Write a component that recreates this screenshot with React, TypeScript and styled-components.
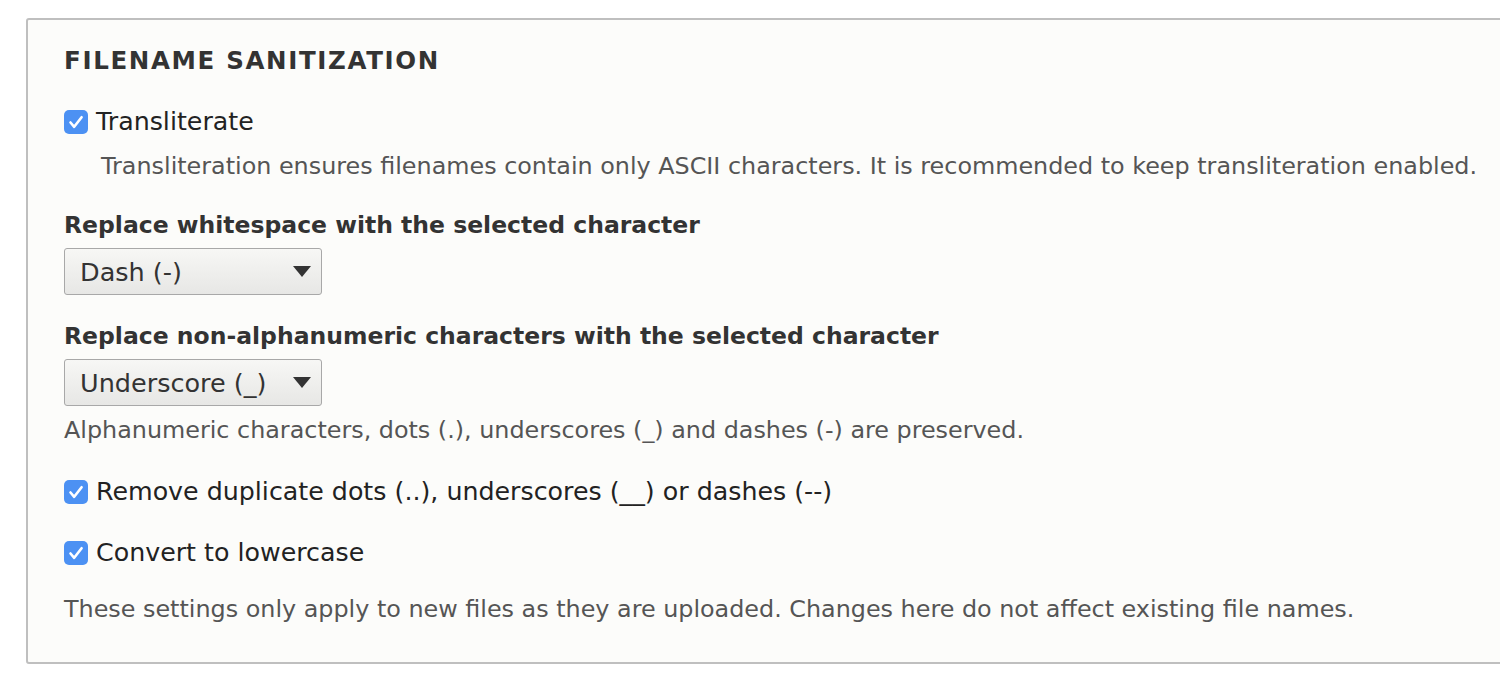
import { createGlobalStyle, styled } from "styled-components"

const GlobalStyle = createGlobalStyle`
html, body {
    margin: 0;
    padding: 0;
    background: #fff;
    overflow: hidden;
}
body {
    font-family: "DejaVu Sans", "Liberation Sans", sans-serif;
    color: #333;
}
`

const Page = styled.div`
padding: 18px 0 0 26px;
`

const Fieldset = styled.fieldset`
box-sizing: border-box;
width: 1500px;
height: 646px;
margin: 0;
padding: 26px 36px 0 36px;
border: 2px solid #bfbfbf;
border-radius: 3px;
background: #fcfcfa;
`

const Legend = styled.h2`
margin: 0 0 31px 0;
font-size: 24.5px;
line-height: 30px;
font-weight: bold;
letter-spacing: 1.65px;
text-transform: uppercase;
color: #333;
`

const Item = styled.div<{ $gap?: number }>`
margin-bottom: ${({ $gap }) => $gap ?? 24}px;
`

const CheckRow = styled.label`
display: flex;
align-items: center;
gap: 8px;
font-size: 25.3px;
line-height: 30px;
color: #222;
`

const Box = styled.span`
display: flex;
align-items: center;
justify-content: center;
width: 24px;
height: 24px;
border-radius: 5px;
background: #4c91f3;
flex: none;
`

const Label = styled.div`
font-size: 23.5px;
line-height: 30px;
font-weight: bold;
color: #333;
margin-bottom: 8px;
`

const Description = styled.div<{ $indent?: boolean }>`
font-size: 23.85px;
line-height: 30px;
color: #555;
margin-top: ${({ $indent }) => ($indent ? 14 : 9)}px;
padding-left: ${({ $indent }) => ($indent ? 37 : 0)}px;
`

const SelectBox = styled.div`
box-sizing: border-box;
display: flex;
align-items: center;
justify-content: space-between;
width: 258px;
height: 47px;
padding: 0 10px 0 15px;
border: 1px solid #a8a8a8;
border-radius: 3px;
background: linear-gradient(#f7f7f5, #e7e7e5);
font-size: 25.5px;
color: #333;
`

function Checkbox({ label }: { label: string }) {
    return (
        <CheckRow>
            <Box>
                <svg width="24" height="24" viewBox="0 0 24 24">
                    <path d="M6.5 12.5 L10.2 16.8 L17.6 7.2" fill="none" stroke="#fff" strokeWidth="2.6" strokeLinecap="round" strokeLinejoin="round" />
                </svg>
            </Box>
            {label}
        </CheckRow>
    )
}

function Select({ value }: { value: string }) {
    return (
        <SelectBox>
            <span>{value}</span>
            <svg width="18" height="12" viewBox="0 0 18 12">
                <path d="M0 0 H18 L9 11 Z" fill="#333" />
            </svg>
        </SelectBox>
    )
}

export default function App() {
    return (
        <Page>
            <GlobalStyle />
            <Fieldset>
                <Legend>Filename sanitization</Legend>
                <Item $gap={29}>
                    <Checkbox label="Transliterate" />
                    <Description $indent>
                        Transliteration ensures filenames contain only ASCII characters. It is recommended to keep transliteration enabled.
                    </Description>
                </Item>
                <Item $gap={26}>
                    <Label>Replace whitespace with the selected character</Label>
                    <Select value="Dash (-)" />
                </Item>
                <Item $gap={32}>
                    <Label>Replace non-alphanumeric characters with the selected character</Label>
                    <Select value="Underscore (_)" />
                    <Description>Alphanumeric characters, dots (.), underscores (_) and dashes (-) are preserved.</Description>
                </Item>
                <Item $gap={31}>
                    <Checkbox label="Remove duplicate dots (..), underscores (__) or dashes (--)" />
                </Item>
                <Item $gap={26}>
                    <Checkbox label="Convert to lowercase" />
                </Item>
                <Description>These settings only apply to new files as they are uploaded. Changes here do not affect existing file names.</Description>
            </Fieldset>
        </Page>
    )
}
